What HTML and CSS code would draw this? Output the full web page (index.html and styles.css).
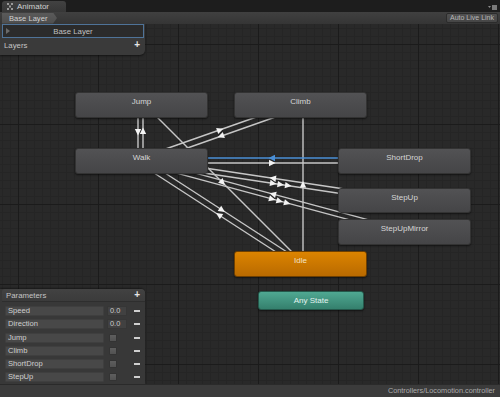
FILE: index.html
```html
<!DOCTYPE html>
<html>
<head>
<meta charset="utf-8">
<title>Animator</title>
<link rel="stylesheet" href="styles.css">
</head>
<body>
<div class="app">
  <div class="tabbar">
    <div class="tab">
      <svg class="tab-icon" width="6" height="7" viewBox="0 0 6 7"><g fill="#9a9a9a"><rect x="0" y="0" width="2" height="2"/><rect x="4" y="0" width="2" height="2"/><rect x="0" y="5" width="2" height="2"/><rect x="4" y="5" width="2" height="2"/><rect x="2" y="2.5" width="2" height="2"/></g></svg>
      <span>Animator</span>
    </div>
    <svg class="win-menu" width="9" height="5" viewBox="0 0 9 5"><path d="M0 1 L3 1 L1.5 3 Z" fill="#8a8a8a"/><rect x="4" y="0" width="5" height="5" fill="#7a7a7a"/></svg>
  </div>
  <div class="toolbar">
    <div class="crumb">Base Layer</div>
    <div class="live-link">Auto Live Link</div>
  </div>
  <div class="graph">
    <svg class="edges" width="500" height="360" viewBox="0 24 500 360">
      <g stroke="#c6c6c6" stroke-width="1.4" fill="none">
        <line x1="138" y1="105" x2="138" y2="161"/>
        <line x1="143" y1="105" x2="143" y2="161"/>
        <line x1="140" y1="158" x2="299" y2="102"/>
        <line x1="142" y1="164" x2="301" y2="108"/>
        <line x1="141" y1="163" x2="404" y2="163"/>
        <line x1="141.4" y1="158.5" x2="404.4" y2="198"/>
        <line x1="140.6" y1="163.5" x2="403.6" y2="203"/>
        <line x1="141.65" y1="158.6" x2="404.65" y2="229.6"/>
        <line x1="140.35" y1="163.4" x2="403.35" y2="234.4"/>
        <line x1="142.6" y1="158.5" x2="301.6" y2="261.5"/>
        <line x1="139.4" y1="163.5" x2="298.4" y2="266.5"/>
        <line x1="143" y1="103" x2="302" y2="262"/>
        <line x1="303" y1="105" x2="303" y2="264"/>
      </g>
      <line x1="141" y1="158" x2="404" y2="158" stroke="#4a8fd6" stroke-width="1.7"/>
      <g fill="#f4f4f4">
        <polygon points="3.5,0 -3,-3.2 -3,3.2" transform="translate(138 132) rotate(90)"/>
        <polygon points="3.5,0 -3,-3.2 -3,3.2" transform="translate(143 131) rotate(-90)"/>
        <polygon points="3.5,0 -3,-3.2 -3,3.2" transform="translate(220 130) rotate(-19.4)"/>
        <polygon points="3.5,0 -3,-3.2 -3,3.2" transform="translate(221 136) rotate(160.6)"/>
        <polygon points="3.5,0 -3,-3.2 -3,3.2" transform="translate(272 163) rotate(0)"/>
        <polygon points="3.5,0 -3,-3.2 -3,3.2" transform="translate(273 178.3) rotate(188.5)"/>
        <polygon points="3.5,0 -3,-3.2 -3,3.2" transform="translate(273 183.4) rotate(8.5)"/>
        <polygon points="3.5,0 -3,-3.2 -3,3.2" transform="translate(280.5 184.5) rotate(8.5)"/>
        <polygon points="3.5,0 -3,-3.2 -3,3.2" transform="translate(288 185.6) rotate(8.5)"/>
        <polygon points="3.5,0 -3,-3.2 -3,3.2" transform="translate(273 194.1) rotate(195.1)"/>
        <polygon points="3.5,0 -3,-3.2 -3,3.2" transform="translate(272 199) rotate(15.1)"/>
        <polygon points="3.5,0 -3,-3.2 -3,3.2" transform="translate(279.5 201) rotate(15.1)"/>
        <polygon points="3.5,0 -3,-3.2 -3,3.2" transform="translate(287 203) rotate(15.1)"/>
        <polygon points="3.5,0 -3,-3.2 -3,3.2" transform="translate(222 210) rotate(32.9)"/>
        <polygon points="3.5,0 -3,-3.2 -3,3.2" transform="translate(219 215) rotate(212.9)"/>
        <polygon points="3.5,0 -3,-3.2 -3,3.2" transform="translate(222.5 182.5) rotate(45)"/>
        <polygon points="3.5,0 -3,-3.2 -3,3.2" transform="translate(303 184.5) rotate(-90)"/>
      </g>
      <polygon points="3.5,0 -3,-3.2 -3,3.2" transform="translate(272 158) rotate(180)" fill="#4a8fd6"/>
    </svg>

    <div class="node n-jump">Jump</div>
    <div class="node n-climb">Climb</div>
    <div class="node n-walk">Walk</div>
    <div class="node n-shortdrop">ShortDrop</div>
    <div class="node n-stepup">StepUp</div>
    <div class="node n-stepupmirror">StepUpMirror</div>
    <div class="node n-idle">Idle</div>
    <div class="node n-any">Any State</div>

    <div class="panel layers">
      <div class="layer-row"><span class="layer-arrow"></span><span class="layer-name">Base Layer</span></div>
      <div class="panel-head"><span>Layers</span><span class="plus">+</span></div>
    </div>

    <div class="panel params">
      <div class="panel-head"><span>Parameters</span><span class="plus">+</span></div>
      <div class="param-list">
        <div class="param"><span class="p-name">Speed</span><span class="p-val">0.0</span><span class="minus"></span></div>
        <div class="param"><span class="p-name">Direction</span><span class="p-val">0.0</span><span class="minus"></span></div>
        <div class="param"><span class="p-name">Jump</span><span class="p-box"><span class="check"></span></span><span class="minus"></span></div>
        <div class="param"><span class="p-name">Climb</span><span class="p-box"><span class="check"></span></span><span class="minus"></span></div>
        <div class="param"><span class="p-name">ShortDrop</span><span class="p-box"><span class="check"></span></span><span class="minus"></span></div>
        <div class="param"><span class="p-name">StepUp</span><span class="p-box"><span class="check"></span></span><span class="minus"></span></div>
      </div>
    </div>
  </div>
  <div class="footer">Controllers/Locomotion.controller</div>
</div>
</body>
</html>
```
FILE: styles.css
```css
* { box-sizing: border-box; margin: 0; padding: 0; }
html, body { width: 500px; height: 397px; overflow: hidden; background: #1c1c1c; }
body { font-family: "Liberation Sans", Arial, sans-serif; font-size: 8px; color: #c8c8c8; }

.app { display: flex; flex-direction: column; width: 500px; height: 397px; }

.tabbar { height: 12px; flex: none; background: #1d1d1d; display: flex; align-items: flex-end; padding-left: 2px; }
.tab { width: 64px; height: 11px; background: linear-gradient(#424242, #373737); border-radius: 3px 3px 0 0; display: flex; align-items: center; gap: 4px; padding-left: 5px; color: #d0d0d0; font-size: 8px; line-height: 10px; }
.tab-icon { flex: none; }
.win-menu { margin-left: auto; margin-right: 3px; align-self: center; margin-top: 2px; }

.toolbar { height: 12px; flex: none; background: linear-gradient(#404040, #353535); display: flex; align-items: center; padding: 0 2px 0 2px; }
.crumb { width: 55px; height: 11px; background: linear-gradient(#5a5a5a, #4e4e4e); clip-path: polygon(0 0, calc(100% - 4px) 0, 100% 50%, calc(100% - 4px) 100%, 0 100%); padding-left: 7px; font-size: 7.6px; line-height: 11px; color: #d2d2d2; }
.live-link { margin-left: auto; height: 10px; padding: 0 3px; background: linear-gradient(#505050, #464646); border: 1px solid #2c2c2c; border-radius: 2px; font-size: 7px; line-height: 8px; color: #b8b8b8; }

.graph { flex: 1; position: relative; overflow: hidden;
  background-color: #292929;
  background-image:
    linear-gradient(90deg, #1b1b1b 1px, transparent 1px),
    linear-gradient(#1b1b1b 1px, transparent 1px),
    linear-gradient(90deg, #252525 1px, transparent 1px),
    linear-gradient(#252525 1px, transparent 1px);
  background-size: 80px 80px, 80px 80px, 8px 8px, 8px 8px;
  background-position: 18px 20px, 18px 20px, 2px 4px, 2px 4px;
}
.edges { position: absolute; left: 0; top: 0; }

.node { position: absolute; width: 133px; height: 26px; border-radius: 3px; background: linear-gradient(#525254, #454547); border: 1px solid #333; box-shadow: 0 1px 2px rgba(0,0,0,0.55); color: #d6d6d6; font-size: 8px; line-height: 10px; padding-top: 4px; text-align: center; }
.n-jump { left: 75px; top: 68px; }
.n-climb { left: 234px; top: 68px; }
.n-walk { left: 75px; top: 124px; }
.n-shortdrop { left: 338px; top: 124px; }
.n-stepup { left: 338px; top: 164px; height: 25px; }
.n-stepupmirror { left: 338px; top: 195px; }
.n-idle { left: 234px; top: 227px; background: linear-gradient(#dc8400, #b96a00); border-color: #6e3f00; color: #f3e3c6; }
.n-any { left: 258px; top: 267px; width: 106px; height: 19px; padding-top: 4px; background: linear-gradient(#4fa892, #35806d); border-color: #24584b; color: #e2f2ee; }

.panel { position: absolute; left: 0; width: 145px; background: #3a3a3a; }
.layers { top: 0; height: 31px; border-radius: 0 0 5px 0; box-shadow: 0 1px 2px rgba(0,0,0,0.5); }
.layer-row { height: 14px; margin: 0 1px 0 2px; background: #2b2b2b; border: 1px solid #4f7398; display: flex; align-items: center; position: relative; }
.layer-arrow { position: absolute; left: 3px; top: 3px; width: 0; height: 0; border-left: 4px solid #6a6a6a; border-top: 3px solid transparent; border-bottom: 3px solid transparent; }
.layer-name { flex: 1; text-align: center; font-size: 7.8px; color: #c0c0c0; }

.panel-head { height: 14px; display: flex; align-items: center; justify-content: space-between; padding: 0 5px 0 4px; font-size: 7.8px; color: #c4c4c4; }
.plus { font-weight: bold; font-size: 10px; color: #e6e6e6; line-height: 10px; }

.params { bottom: 0; height: 95px; border-radius: 0 5px 0 0; background: #383838; box-shadow: 0 -1px 2px rgba(0,0,0,0.4); }
.params .panel-head { height: 13px; margin: 0 0 0 2px; background: linear-gradient(#424242, #3b3b3b); border-radius: 3px 4px 0 0; border-bottom: 1px solid #2e2e2e; }
.param-list { display: flex; flex-direction: column; gap: 3.3px; padding: 4px 0 0 5px; }
.param { height: 10px; display: flex; align-items: center; }
.p-name { width: 99px; height: 10px; background: #484848; border: 1px solid #3f3f3f; border-radius: 1px; font-size: 7.6px; line-height: 8px; padding-left: 2px; color: #cfcfcf; }
.p-val { width: 20px; height: 10px; margin-left: 3px; background: #414141; border: 1px solid #363636; font-size: 7.4px; line-height: 8px; padding-left: 2px; color: #cacaca; }
.p-box { width: 20px; height: 10px; margin-left: 3px; display: flex; align-items: center; padding-left: 2px; }
.check { width: 8px; height: 8px; background: linear-gradient(#5e5e5e, #525252); border: 1px solid #333; border-radius: 1px; }
.minus { width: 6px; height: 2px; background: #d0d0d0; margin-left: 7px; }

.footer { height: 13px; flex: none; background: #3b3b3b; border-top: 1px solid #2a2a2a; text-align: right; padding-right: 5px; font-size: 7.3px; line-height: 12px; color: #acacac; }
```
